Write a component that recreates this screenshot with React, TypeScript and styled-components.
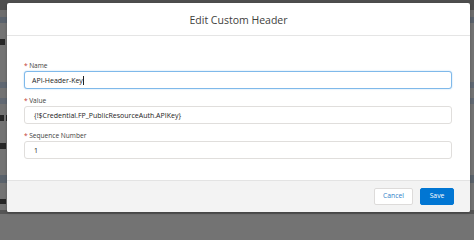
import React from "react";
import styled, { createGlobalStyle } from "styled-components";

const Global = createGlobalStyle`
  html, body { margin: 0; padding: 0; }
  body {
    background: #737373;
    font-family: "Open Sans", "Noto Sans", Arial, sans-serif;
  }
`;

const Root = styled.div`
  position: relative;
  width: 474px;
  height: 216px;
  overflow: hidden;
  background: #737373;
`;

const Page = styled.div`
  display: flex;
  flex-direction: column;
  width: 474px;
  height: 216px;
`;

const Band = styled.div<{ $h: number; $bg?: string }>`
  height: ${(p) => p.$h}px;
  background: ${(p) => p.$bg || "transparent"};
  display: flex;
  align-items: center;
  gap: 2px;
`;

const Mark = styled.span<{ $w: number; $h: number }>`
  display: block;
  width: ${(p) => p.$w}px;
  height: ${(p) => p.$h}px;
  background: #262626;
`;

const Overlay = styled.div`
  position: absolute;
  inset: 0;
  padding: 3px 4px 4px 7px;
  display: flex;
`;

const Modal = styled.div`
  flex: 1;
  display: flex;
  flex-direction: column;
  background: #fff;
  border-radius: 2px;
  overflow: hidden;
  box-shadow: 0 1px 3px rgba(0, 0, 0, 0.25);
`;

const Header = styled.header`
  height: 32px;
  border-bottom: 1px solid #e5e5e5;
  display: flex;
  align-items: center;
  justify-content: center;
`;

const Title = styled.h2`
  margin: 0;
  font-size: 10.5px;
  font-weight: 400;
  color: #3e3e3c;
  line-height: 1;
  padding-top: 2px;
`;

const Body = styled.div`
  flex: 1;
  padding: 26px 18px 0 17px;
  display: flex;
  flex-direction: column;
  gap: 8px;
`;

const Field = styled.div`
  display: flex;
  flex-direction: column;
  gap: 1px;
`;

const Label = styled.label`
  height: 8px;
  line-height: 8px;
  font-size: 6.6px;
  color: #3e3e3c;
  display: flex;
  align-items: center;
  gap: 1.5px;
`;

const Req = styled.abbr`
  color: #c23934;
  text-decoration: none;
  font-size: 6.6px;
`;

const Input = styled.div<{ $focus?: boolean }>`
  height: 18px;
  box-sizing: border-box;
  border: 1px solid ${(p) => (p.$focus ? "#7fb9ea" : "#e0dedc")};
  box-shadow: ${(p) => (p.$focus ? "0 0 1.5px #9ccbf0" : "none")};
  border-radius: 3px;
  background: #fff;
  padding: 0 8px 0 ${(p) => (p.$focus ? 7 : 9)}px;
  display: flex;
  align-items: center;
  font-size: 7px;
  color: #1a1a1a;
`;

const Caret = styled.span`
  display: inline-block;
  width: 0.6px;
  height: 9px;
  background: #222;
  margin-left: 0.5px;
`;

const Footer = styled.footer`
  height: 32px;
  box-sizing: border-box;
  border-top: 1px solid #e3e3e3;
  background: #f3f3f3;
  display: flex;
  align-items: center;
  justify-content: flex-end;
  gap: 7px;
  padding: 0 16px 0 0;
`;

const Button = styled.button<{ $brand?: boolean }>`
  height: 17px;
  box-sizing: border-box;
  padding: 0;
  width: ${(p) => (p.$brand ? 34 : 39)}px;
  border-radius: 2px;
  border: 1px solid ${(p) => (p.$brand ? "#0176d3" : "#dddbda")};
  background: ${(p) => (p.$brand ? "#0176d3" : "#fff")};
  color: ${(p) => (p.$brand ? "#fff" : "#2f7fc9")};
  font-family: "Open Sans", Arial, sans-serif;
  font-size: 6.8px;
  line-height: 1;
`;

export default function App() {
  return (
    <>
      <Global />
      <Root>
        <Page>
          <Band $h={10} $bg="#4e4e4e" />
          <Band $h={7} $bg="#6d6d6d" />
          <Band $h={6} $bg="#5a626c" />
          <Band $h={15} />
          <Band $h={7}>
            <Mark $w={5} $h={6} />
          </Band>
          <Band $h={37} />
          <Band $h={6} $bg="#5f6772" />
          <Band $h={10} />
          <Band $h={6} $bg="#616872" />
          <Band $h={10} />
          <Band $h={8}>
            <Mark $w={4} $h={6} />
            <Mark $w={1} $h={6} />
          </Band>
          <Band $h={20} />
          <Band $h={8}>
            <Mark $w={6} $h={6} />
          </Band>
          <Band $h={25} />
          <Band $h={8} $bg="#5a626b" />
          <Band $h={14} />
          <Band $h={9}>
            <Mark $w={6} $h={5} />
          </Band>
          <Band $h={4} />
          <Band $h={4} $bg="#555" />
        </Page>
        <Overlay>
          <Modal>
            <Header>
              <Title>Edit Custom Header</Title>
            </Header>
            <Body>
              <Field>
                <Label>
                  <Req>*</Req>Name
                </Label>
                <Input $focus>
                  API-Header-Key
                  <Caret />
                </Input>
              </Field>
              <Field>
                <Label>
                  <Req>*</Req>Value
                </Label>
                <Input>{"{!$Credential.FP_PublicResourceAuth.APIKey}"}</Input>
              </Field>
              <Field>
                <Label>
                  <Req>*</Req>Sequence Number
                </Label>
                <Input>1</Input>
              </Field>
            </Body>
            <Footer>
              <Button>Cancel</Button>
              <Button $brand>Save</Button>
            </Footer>
          </Modal>
        </Overlay>
      </Root>
    </>
  );
}
